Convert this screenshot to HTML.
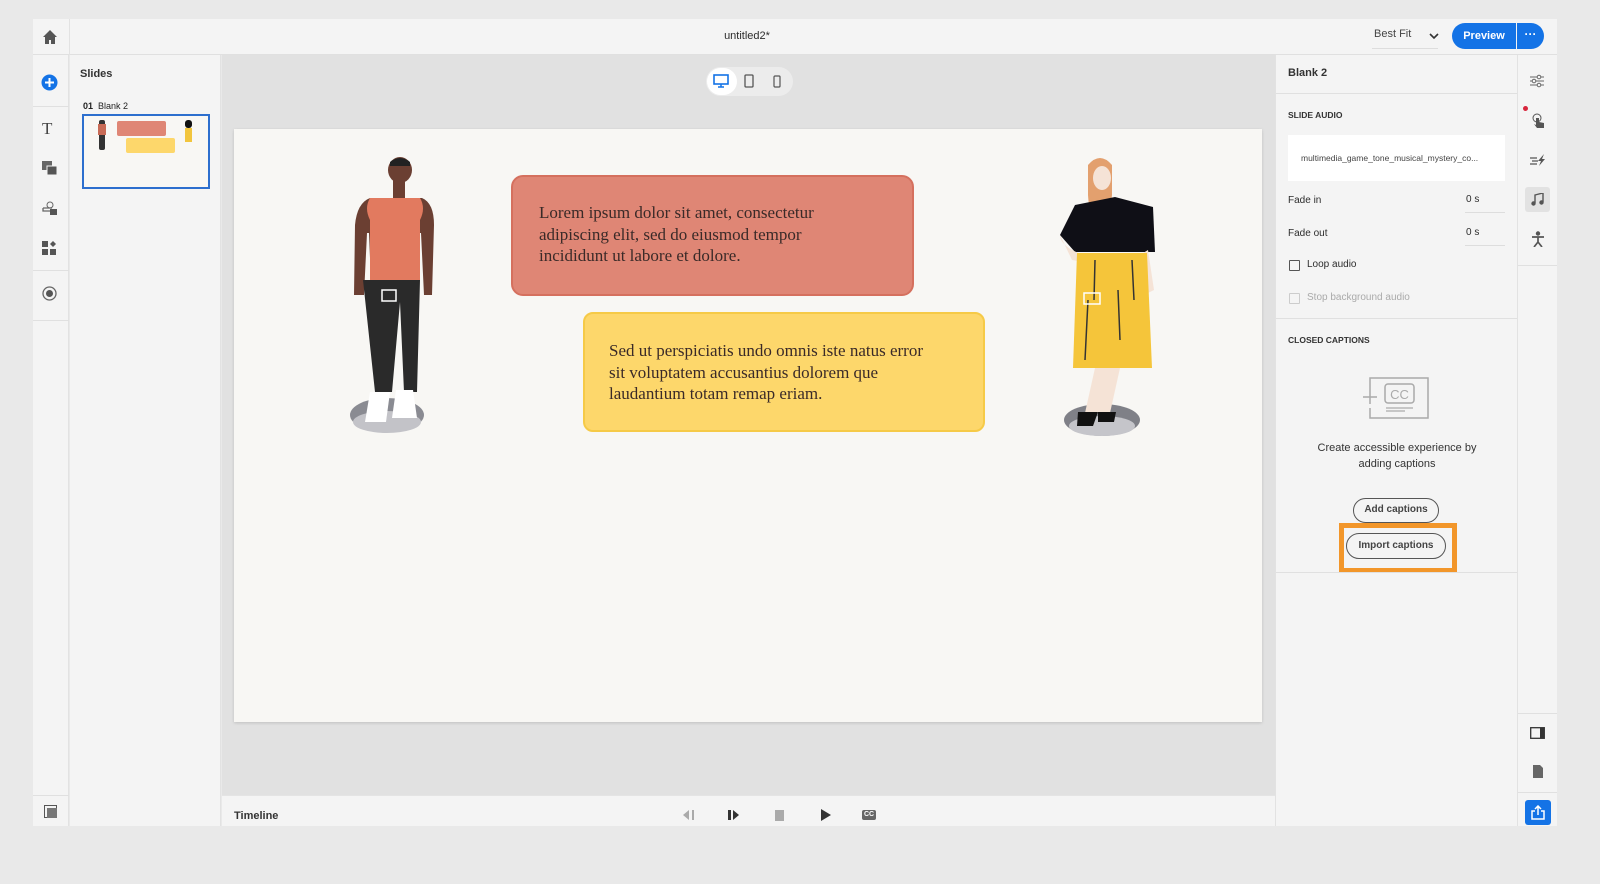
<!DOCTYPE html>
<html><head><meta charset="utf-8"><style>
*{box-sizing:border-box;margin:0;padding:0}
body{width:1600px;height:884px;background:#e9e9e9;font-family:"Liberation Sans",sans-serif;color:#2c2c2c;position:relative;overflow:hidden}
.a{position:absolute}
.t{font-size:11px;color:#2c2c2c}
.ser{font-family:"Liberation Serif",serif;font-size:17px;line-height:21.5px;color:#3a2a28}
.ico{fill:#555}
</style></head><body>
<!-- top bar -->
<div class="a" style="left:33px;top:19px;width:1524px;height:36px;background:#f4f4f4;border-bottom:1px solid #e0e0e0"></div>
<div class="a" style="left:69px;top:19px;width:1px;height:36px;background:#e2e2e2"></div>
<svg class="a" style="left:42px;top:29px" width="16" height="16" viewBox="0 0 16 16"><path class="ico" d="M8 1L1 8h2v7h4v-4h2v4h4V8h2z"/></svg>
<div class="a t" style="left:700px;top:30px;width:94px;text-align:center">untitled2*</div>
<div class="a t" style="left:1374px;top:28px;color:#444">Best Fit</div>
<svg class="a" style="left:1429px;top:32px" width="10" height="8"><path d="M1 2l4 4 4-4" stroke="#333" stroke-width="1.6" fill="none"/></svg>
<div class="a" style="left:1372px;top:48px;width:66px;height:1px;background:#ddd"></div>
<div class="a" style="left:1452px;top:23px;width:64px;height:26px;background:#1473e6;border-radius:13px 0 0 13px;color:#fff;font-weight:bold;font-size:11px;text-align:center;line-height:26px">Preview</div>
<div class="a" style="left:1517px;top:23px;width:27px;height:26px;background:#1473e6;border-radius:0 13px 13px 0;color:#fff;font-weight:bold;font-size:12px;text-align:center;line-height:22px">···</div>
<!-- left bar -->
<div class="a" style="left:33px;top:55px;width:36px;height:771px;background:#f4f4f4;border-right:1px solid #e2e2e2"></div>
<svg class="a" style="left:41px;top:74px" width="17" height="17"><circle cx="8.5" cy="8.5" r="8" fill="#1473e6"/><path d="M8.5 4v9M4 8.5h9" stroke="#fff" stroke-width="2"/></svg>
<div class="a" style="left:33px;top:106px;width:36px;height:1px;background:#e0e0e0"></div>
<div class="a" style="left:42px;top:119px;font-family:'Liberation Serif',serif;font-size:17px;color:#444">T</div>
<svg class="a" style="left:42px;top:161px" width="15" height="14"><rect x="0" y="0" width="10" height="9" fill="#666"/><rect x="5" y="5" width="10" height="9" fill="#555" stroke="#f4f4f4"/></svg>
<svg class="a" style="left:42px;top:201px" width="15" height="14"><path d="M1 7h9M1 7v3h7" stroke="#666" fill="none" stroke-width="1.3"/><circle cx="8" cy="4" r="3" fill="none" stroke="#666"/><rect x="8" y="8" width="7" height="6" fill="#555"/></svg>
<svg class="a" style="left:42px;top:241px" width="14" height="14"><rect x="0" y="0" width="6" height="6" fill="#555"/><rect x="0" y="8" width="6" height="6" fill="#555"/><rect x="8" y="8" width="6" height="6" fill="#555"/><path d="M11 0l3 3-3 3-3-3z" fill="#555"/></svg>
<div class="a" style="left:33px;top:270px;width:36px;height:1px;background:#e0e0e0"></div>
<svg class="a" style="left:42px;top:286px" width="15" height="15"><circle cx="7.5" cy="7.5" r="6.5" fill="none" stroke="#666" stroke-width="1.3"/><circle cx="7.5" cy="7.5" r="3.5" fill="#555"/></svg>
<div class="a" style="left:33px;top:320px;width:36px;height:1px;background:#e0e0e0"></div>
<div class="a" style="left:33px;top:795px;width:36px;height:1px;background:#e0e0e0"></div>
<svg class="a" style="left:44px;top:805px" width="13" height="13"><rect x="0.5" y="0.5" width="12" height="12" fill="none" stroke="#555"/><rect x="3" y="3" width="10" height="10" fill="#777"/></svg>
<!-- slides panel -->
<div class="a" style="left:70px;top:55px;width:151px;height:771px;background:#f4f4f4;border-right:1px solid #e2e2e2"></div>
<div class="a" style="left:80px;top:68px;font-size:11px;font-weight:bold;color:#333">Slides</div>
<div class="a" style="left:83px;top:101px;font-size:9px;color:#222"><b>01</b>&nbsp; Blank 2</div>
<div class="a" style="left:82px;top:114px;width:128px;height:75px;border:2px solid #2d6fce;background:#f8f7f4">
 <div class="a" style="left:33px;top:5px;width:49px;height:15px;background:#df8675;border-radius:2px"></div>
 <div class="a" style="left:42px;top:22px;width:49px;height:15px;background:#fdd76b;border-radius:2px"></div>
 <div class="a" style="left:15px;top:4px;width:6px;height:30px;background:#333;border-radius:2px"></div>
 <div class="a" style="left:14px;top:8px;width:8px;height:11px;background:#c86b56"></div>
 <div class="a" style="left:101px;top:4px;width:7px;height:8px;background:#111;border-radius:3px"></div>
 <div class="a" style="left:101px;top:12px;width:7px;height:14px;background:#f2c53d"></div>
</div>
<!-- canvas area -->
<div class="a" style="left:222px;top:55px;width:1053px;height:740px;background:#e1e1e1"></div>
<div class="a" style="left:706px;top:67px;width:87px;height:29px;background:#ececec;border-radius:15px"></div>
<div class="a" style="left:707px;top:68px;width:30px;height:27px;background:#fff;border-radius:14px"></div>
<svg class="a" style="left:713px;top:74px" width="16" height="14"><rect x="1" y="1" width="14" height="9" fill="none" stroke="#1473e6" stroke-width="1.6"/><path d="M5 13h6M8 10v3" stroke="#1473e6" stroke-width="1.5"/></svg>
<svg class="a" style="left:744px;top:74px" width="10" height="14"><rect x="1" y="1" width="8" height="12" rx="1" fill="none" stroke="#555" stroke-width="1.3"/></svg>
<svg class="a" style="left:773px;top:75px" width="8" height="13"><rect x="1" y="1" width="6" height="11" rx="1" fill="none" stroke="#555" stroke-width="1.2"/></svg>
<div class="a" style="left:234px;top:129px;width:1028px;height:593px;background:#f8f7f4;box-shadow:0 1px 3px rgba(0,0,0,.15)"></div>
<div class="a" style="left:511px;top:175px;width:403px;height:121px;background:#df8675;border:2px solid #d5705e;border-radius:12px"></div>
<div class="a ser" style="left:539px;top:202px;width:310px">Lorem ipsum dolor sit amet, consectetur adipiscing elit, sed do eiusmod tempor incididunt ut labore et dolore.</div>
<div class="a" style="left:583px;top:312px;width:402px;height:120px;background:#fdd76b;border:2px solid #f6ca47;border-radius:10px"></div>
<div class="a ser" style="left:609px;top:340px;width:330px">Sed ut perspiciatis undo omnis iste natus error sit voluptatem accusantius dolorem que laudantium totam remap eriam.</div>
<!-- man -->
<svg class="a" style="left:330px;top:150px" width="160" height="300">
<ellipse cx="57" cy="265" rx="37" ry="17" fill="#8a8b92"/><ellipse cx="57" cy="272" rx="34" ry="11" fill="#c3c3c8"/>
<ellipse cx="70" cy="20" rx="12" ry="13" fill="#6b3f32"/><path d="M60 12q10-8 20 0v4H60z" fill="#222"/>
<rect x="63" y="30" width="12" height="20" fill="#6b3f32"/>
<path d="M25 75q2-22 15-27l52 0q12 5 12 27l-2 70h-8l-3-62-2 0-2 50H41l-2-50h-2l-3 62h-10z" fill="#6b3f32"/>
<path d="M40 48h50q6 10 0 22v60H40V70q-6-12 0-22z" fill="#e27a5f"/>
<path d="M33 130h57l-3 112H74l-4-90-8 90H45z" fill="#2a2a2a"/>
<path d="M40 242h20l-4 30H35z" fill="#fff"/><path d="M66 240h17l4 28H62z" fill="#fff"/>
<rect x="52" y="140" width="14" height="11" fill="none" stroke="#fff" stroke-width="1.5"/>
</svg>
<!-- woman -->
<svg class="a" style="left:1040px;top:150px" width="150" height="300">
<ellipse cx="62" cy="270" rx="38" ry="16" fill="#7f8087"/><ellipse cx="62" cy="276" rx="33" ry="10" fill="#c5c5ca"/>
<path d="M48 15q12-14 24 0v30q-4 30-12 30q-10 0-12-30z" fill="#e3a06e"/>
<ellipse cx="62" cy="28" rx="9" ry="12" fill="#f5e3d6"/>
<path d="M20 85l15-30 40-8 38 10 2 45H35z" fill="#0f0f16"/>
<path d="M20 85q0 15 40 25l2 5-30-5z" fill="#f5e3d6"/><path d="M108 100l6 40-10 5-4-40z" fill="#f5e3d6"/>
<path d="M37 103h70l5 115H33z" fill="#f5c53a"/>
<path d="M55 110l-1 40M92 110l2 40M48 150l-3 60M78 140l2 50" stroke="#333" stroke-width="1.5"/>
<path d="M55 218h25l-10 45H45z" fill="#f5e3d6"/>
<path d="M38 262h20l-5 14H37z" fill="#111"/><path d="M58 262h18l-2 10H58z" fill="#111"/>
<rect x="44" y="143" width="16" height="11" fill="none" stroke="#fff" stroke-width="1.5"/>
</svg>
<!-- timeline -->
<div class="a" style="left:222px;top:795px;width:1053px;height:31px;background:#f4f4f4;border-top:1px solid #e4e4e4"></div>
<div class="a" style="left:234px;top:810px;font-size:11px;font-weight:bold;color:#333">Timeline</div>
<svg class="a" style="left:682px;top:809px" width="14" height="12"><path d="M7 1L1 6l6 5z" fill="#aaa"/><rect x="10" y="1" width="2" height="10" fill="#aaa"/></svg>
<svg class="a" style="left:727px;top:809px" width="14" height="12"><rect x="1" y="1" width="3" height="10" fill="#333"/><path d="M6 1l6 5-6 5z" fill="#333"/></svg>
<div class="a" style="left:775px;top:810px;width:9px;height:11px;background:#aaa"></div>
<svg class="a" style="left:820px;top:809px" width="12" height="12"><path d="M1 0l10 6-10 6z" fill="#333"/></svg>
<div class="a" style="left:862px;top:810px;width:14px;height:10px;background:#666;border-radius:2px;color:#fff;font-size:7px;font-weight:bold;line-height:10px;text-align:center">CC</div>
<!-- right panel -->
<div class="a" style="left:1275px;top:55px;width:243px;height:771px;background:#f4f4f4;border-left:1px solid #e2e2e2;border-right:1px solid #e2e2e2"></div>
<div class="a" style="left:1288px;top:67px;font-size:11px;font-weight:bold;color:#333">Blank 2</div>
<div class="a" style="left:1276px;top:93px;width:241px;height:1px;background:#e0e0e0"></div>
<div class="a" style="left:1288px;top:110px;font-size:8.5px;font-weight:bold;color:#333">SLIDE AUDIO</div>
<div class="a" style="left:1288px;top:135px;width:217px;height:46px;background:#fff;font-size:8.5px;color:#444;line-height:46px;padding-left:13px">multimedia_game_tone_musical_mystery_co...</div>
<div class="a t" style="left:1288px;top:195px;font-size:10px">Fade in</div>
<div class="a t" style="left:1466px;top:194px;font-size:10px">0 s</div>
<div class="a" style="left:1465px;top:212px;width:40px;height:1px;background:#ddd"></div>
<div class="a t" style="left:1288px;top:228px;font-size:10px">Fade out</div>
<div class="a t" style="left:1466px;top:227px;font-size:10px">0 s</div>
<div class="a" style="left:1465px;top:245px;width:40px;height:1px;background:#ddd"></div>
<div class="a" style="left:1289px;top:260px;width:11px;height:11px;border:1.5px solid #555;border-radius:1px"></div>
<div class="a t" style="left:1307px;top:259px;font-size:10px">Loop audio</div>
<div class="a" style="left:1289px;top:293px;width:11px;height:11px;border:1.5px solid #ccc;border-radius:1px"></div>
<div class="a t" style="left:1307px;top:292px;font-size:10px;color:#aaa">Stop background audio</div>
<div class="a" style="left:1276px;top:318px;width:241px;height:1px;background:#e0e0e0"></div>
<div class="a" style="left:1288px;top:335px;font-size:8.5px;font-weight:bold;color:#333">CLOSED CAPTIONS</div>
<svg class="a" style="left:1362px;top:376px" width="70" height="46"><path d="M8 14V2h58v40H8V32" stroke="#aaa" stroke-width="1.5" fill="none"/><path d="M1 21h14M8 14v14" stroke="#aaa" stroke-width="1.5"/><rect x="23" y="8" width="29" height="19" rx="3" stroke="#aaa" stroke-width="1.5" fill="none"/><text x="37.5" y="23" font-size="13" fill="#aaa" text-anchor="middle" font-family="Liberation Sans">CC</text><path d="M24 32h27M24 35h19" stroke="#aaa" stroke-width="1.2"/></svg>
<div class="a" style="left:1290px;top:440px;width:214px;text-align:center;font-size:11px;line-height:16px;color:#333">Create accessible experience by<br>adding captions</div>
<div class="a" style="left:1353px;top:498px;width:86px;height:25px;border:1.5px solid #555;border-radius:13px;font-size:10px;font-weight:bold;color:#444;text-align:center;line-height:22px">Add captions</div>
<div class="a" style="left:1339px;top:523px;width:118px;height:50px;border:5px solid #f2962a"></div>
<div class="a" style="left:1346px;top:533px;width:100px;height:26px;border:1.5px solid #555;border-radius:13px;font-size:10px;font-weight:bold;color:#444;text-align:center;line-height:23px">Import captions</div>
<div class="a" style="left:1276px;top:572px;width:241px;height:1px;background:#e0e0e0"></div>
<!-- icon strip -->
<div class="a" style="left:1518px;top:55px;width:39px;height:771px;background:#f4f4f4"></div>
<svg class="a" style="left:1530px;top:74px" width="14" height="14"><path d="M0 3h14M0 7h14M0 11h14" stroke="#666"/><circle cx="9" cy="3" r="1.8" fill="#f4f4f4" stroke="#666"/><circle cx="4" cy="7" r="1.8" fill="#f4f4f4" stroke="#666"/><circle cx="9" cy="11" r="1.8" fill="#f4f4f4" stroke="#666"/></svg>
<div class="a" style="left:1523px;top:106px;width:5px;height:5px;border-radius:50%;background:#d7263d"></div>
<svg class="a" style="left:1531px;top:113px" width="14" height="16"><circle cx="6" cy="5" r="4" fill="none" stroke="#555"/><path d="M5 5v7l-2-1 3 4h7v-5l-5-1V5z" fill="#555"/></svg>
<svg class="a" style="left:1530px;top:154px" width="15" height="12"><path d="M0 4h7M2 7h6M0 10h7" stroke="#555" stroke-width="1.3"/><path d="M14 0L8 7h3l-2 5 6-7h-3z" fill="#555"/></svg>
<div class="a" style="left:1525px;top:187px;width:25px;height:25px;background:#e2e2e2;border-radius:3px"></div>
<svg class="a" style="left:1531px;top:193px" width="13" height="13"><path d="M4 10V2l8-2v9" stroke="#555" stroke-width="1.4" fill="none"/><circle cx="2.5" cy="10.5" r="2.2" fill="#555"/><circle cx="10.5" cy="9.5" r="2.2" fill="#555"/></svg>
<svg class="a" style="left:1531px;top:231px" width="14" height="16"><circle cx="7" cy="2.5" r="2.2" fill="#555"/><path d="M1 6h12M7 6v5M7 11l-4 5M7 11l4 5" stroke="#555" stroke-width="1.7" fill="none"/></svg>
<div class="a" style="left:1518px;top:265px;width:39px;height:1px;background:#e0e0e0"></div>
<div class="a" style="left:1518px;top:713px;width:39px;height:1px;background:#e0e0e0"></div>
<svg class="a" style="left:1530px;top:727px" width="15" height="12"><rect x="0.7" y="0.7" width="13.6" height="10.6" fill="none" stroke="#333" stroke-width="1.3"/><rect x="10" y="1" width="4" height="10" fill="#333"/></svg>
<svg class="a" style="left:1533px;top:765px" width="10" height="13"><path d="M0 0h7l3 3v10H0z" fill="#666"/></svg>
<div class="a" style="left:1518px;top:792px;width:39px;height:1px;background:#e0e0e0"></div>
<div class="a" style="left:1525px;top:800px;width:26px;height:25px;background:#1473e6;border-radius:3px"></div>
<svg class="a" style="left:1531px;top:805px" width="14" height="15"><path d="M4 6H1v8h12V6h-3" stroke="#fff" stroke-width="1.5" fill="none"/><path d="M7 10V1M4 4l3-3 3 3" stroke="#fff" stroke-width="1.5" fill="none"/></svg>
</body></html>
